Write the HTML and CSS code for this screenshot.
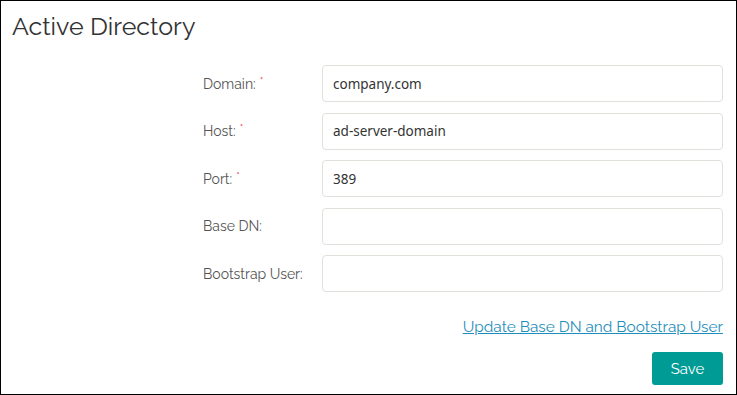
FILE: index.html
```html
<!DOCTYPE html>
<html lang="en">
  <head>
    <meta charset="UTF-8" />
    <title>Active Directory</title>
    <link rel="stylesheet" href="styles.css">
  </head>
  <body>
    <div class="panel">
      <h1 class="panel-title">Active Directory</h1>

      <form class="ad-form">
        <label class="field-label">Domain:<span class="req">*</span></label>
        <input class="field-input" type="text" value="company.com" />

        <label class="field-label">Host:<span class="req">*</span></label>
        <input class="field-input" type="text" value="ad-server-domain" />

        <label class="field-label">Port:<span class="req">*</span></label>
        <input class="field-input" type="text" value="389" />

        <label class="field-label">Base DN:</label>
        <input class="field-input" type="text" value="" />

        <label class="field-label">Bootstrap User:</label>
        <input class="field-input" type="text" value="" />
      </form>

      <div class="actions">
        <a class="update-link" href="#">Update Base DN and Bootstrap User</a>
        <button class="save-btn" type="button">Save</button>
      </div>
    </div>
  </body>
</html>
```

FILE: styles.css
```css
html, body {
  margin: 0;
  padding: 0;
  background: #fff;
}

.panel {
  box-sizing: border-box;
  width: 737px;
  height: 395px;
  border: 1px solid #000;
  font-family: "Raleway", Lato, "Open Sans", sans-serif;
  color: #444;
}

.panel-title {
  margin: 0;
  padding: 9px 0 0 11px;
  font-size: 25px;
  font-weight: 400;
  line-height: 32px;
  color: #333;
}

.ad-form {
  display: grid;
  grid-template-columns: 119px 401px;
  grid-auto-rows: 37px;
  row-gap: 10.5px;
  justify-content: end;
  align-items: center;
  margin-top: 23px;
  padding-right: 13px;
}

.field-label {
  font-size: 14px;
  color: #555;
}

.req {
  color: #e0454a;
  font-size: 11px;
  vertical-align: top;
  margin-left: 4px;
  position: relative;
  top: -1px;
}

.field-input {
  box-sizing: border-box;
  height: 37px;
  width: 100%;
  border: 1px solid #e3e0dc;
  border-radius: 4px;
  padding: 0 10px;
  font-family: "Noto Sans", "Open Sans", sans-serif;
  font-size: 13.5px;
  color: #333;
  outline: none;
}

.actions {
  display: flex;
  flex-direction: column;
  align-items: flex-end;
  padding-right: 13px;
  margin-top: 25px;
}

.update-link {
  font-size: 15.4px;
  color: #1f8ebc;
  text-decoration: underline;
  line-height: 20px;
}

.save-btn {
  margin-top: 15px;
  width: 71px;
  height: 33px;
  border: none;
  border-radius: 3px;
  background: #009b94;
  color: #fff;
  font-family: "Raleway", Lato, "Open Sans", sans-serif;
  font-size: 15px;
}
```
